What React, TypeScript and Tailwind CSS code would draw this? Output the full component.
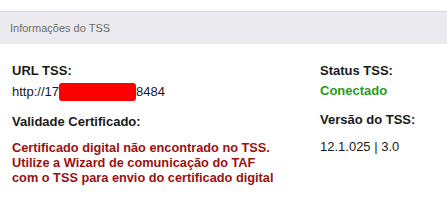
export default function App() {
  return (
    <div className="w-[447px] h-[215px] bg-white font-['Liberation_Sans',Arial,sans-serif] pt-[11px]">
      <div className="border-t border-[#d6d6d6] bg-[#ebebef] h-[33px] flex items-center pl-[10px]">
        <span className="text-[11px] text-[#6b6b6b]">Informações do TSS</span>
      </div>
      <div className="flex pl-[12px] pt-[19px]">
        <div className="w-[308px]">
          <p className="text-[13px] font-bold text-[#1a1a1a] leading-[16px]">URL TSS:</p>
          <p className="mt-[4px] text-[13px] text-[#1a1a1a] leading-[16px] flex items-center">
            http://17
            <span className="inline-block w-[77px] h-[18px] bg-[#ff0000] rounded-[3px]" />
            8484
          </p>
          <p className="mt-[13px] text-[13px] font-bold text-[#1a1a1a] leading-[16px]">Validade Certificado:</p>
          <p className="mt-[10px] text-[12.75px] font-bold text-[#9a1010] leading-[15px] w-[290px]">
            Certificado digital não encontrado no TSS.
            <br />
            Utilize a Wizard de comunicação do TAF
            <br />
            com o TSS para envio do certificado digital
          </p>
        </div>
        <div>
          <p className="text-[13px] font-bold text-[#1a1a1a] leading-[16px]">Status TSS:</p>
          <p className="mt-[4px] text-[13px] font-bold text-[#1e9e1e] leading-[16px]">Conectado</p>
          <p className="mt-[13px] text-[13px] font-bold text-[#1a1a1a] leading-[16px]">Versão do TSS:</p>
          <p className="mt-[11px] text-[13px] text-[#1a1a1a] leading-[16px]">12.1.025 | 3.0</p>
        </div>
      </div>
    </div>
  );
}
